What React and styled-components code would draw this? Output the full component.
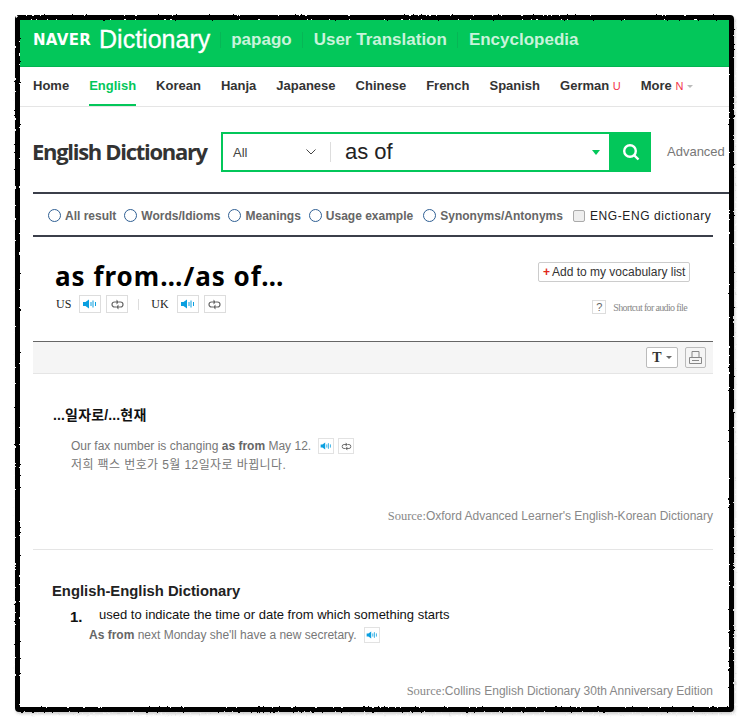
import React from "react";
import styled, { createGlobalStyle } from "styled-components";

const GlobalStyle = createGlobalStyle`
  html, body { margin: 0; padding: 0; background: #fff; }
  body { font-family: "Liberation Sans", Arial, "Noto Sans CJK KR", sans-serif; }
  * { box-sizing: border-box; }
`;

const tabs = ["Home", "English", "Korean", "Hanja", "Japanese", "Chinese", "French", "Spanish"];
const scopes = [
  ["All result", 10],
  ["Words/Idioms", 10],
  ["Meanings", 10],
  ["Usage example", 12],
  ["Synonyms/Antonyms", 12],
];

const SoundIcon = () => (
  <svg width="14" height="10" viewBox="0 0 14 10">
    <path d="M0 3h2.500L6 .5v9L2.500 7H0z" fill="#0a9fe0" />
    <path d="M8 3v4M10 1.500v7M12.500 3v4" stroke="#0a9fe0" strokeWidth="1" fill="none" />
  </svg>
);

const LoopIcon = () => (
  <svg width="13" height="11" viewBox="0 0 13 11" fill="none" stroke="#666" strokeWidth="1.200">
    <path d="M5 8H3.500a2.500 2.500 0 0 1 0-5H6" />
    <path d="M8 3h1.500a2.500 2.500 0 0 1 0 5H7" />
    <path d="M5.500 .5v5l2.500-2.500zM7.500 5.500v5L5 8z" fill="#666" stroke="none" />
  </svg>
);

const SearchIcon = () => (
  <svg width="18" height="18" viewBox="0 0 18 18" fill="none" stroke="#fff" strokeWidth="2.400">
    <circle cx="8" cy="8" r="5.800" />
    <path d="M12.300 12.300L16.500 16.500" />
  </svg>
);

const ChevronIcon = () => (
  <svg width="10" height="6" viewBox="0 0 10 6" fill="none" stroke="#444" strokeWidth="1">
    <path d="M.5.5L5 5 9.500.5" />
  </svg>
);

const PrintIcon = () => (
  <svg width="13" height="14" viewBox="0 0 13 14" fill="none" stroke="#888" strokeWidth="1">
    <path d="M3 6.500V.5h7v6M.5 6.500h12v6H.5zM3 9.500h7" />
  </svg>
);

const App = () => (
  <>
    <GlobalStyle />
    <svg width="0" height="0" style={{ position: "absolute" }}>
      <filter id="rough" x="-2%" y="-2%" width="104%" height="104%">
        <feTurbulence type="fractalNoise" baseFrequency="0.35" numOctaves="2" seed="4" />
        <feDisplacementMap in="SourceGraphic" scale="2.500" />
      </filter>
    </svg>
    <Page>
      <Frame>
        <Inner>
          <Header>
            <Logo>NAVER</Logo>
            <Brand>Dictionary</Brand>
            <HeaderLink $first>papago</HeaderLink>
            <HeaderLink>User Translation</HeaderLink>
            <HeaderLink>Encyclopedia</HeaderLink>
          </Header>

          <Nav>
            {tabs.map((tab) => (
              <Tab key={tab} $active={tab === "English"}>{tab}</Tab>
            ))}
            <Tab>German <New>U</New></Tab>
            <Tab>More <New>N</New><NavCaret /></Tab>
          </Nav>

          <SearchRow>
            <PageTitle>English Dictionary</PageTitle>
            <SearchBox>
              <Category>All<ChevronIcon /></Category>
              <Query>as of</Query>
              <DropCaret />
            </SearchBox>
            <SearchButton><SearchIcon /></SearchButton>
            <Advanced>Advanced</Advanced>
          </SearchRow>

          <Filters>
            {scopes.map(([label, gap]) => (
              <Scope key={label} $gap={gap}>
                <Radio type="radio" name="scope" />
                {label}
              </Scope>
            ))}
            <EngOnly>
              <Check />
              ENG-ENG dictionary
            </EngOnly>
          </Filters>

          <Entry>
            <EntryLeft>
              <Word>as from…/as of…</Word>
              <Phonetics>
                <Accent>US</Accent>
                <AudioButton><SoundIcon /></AudioButton>
                <AudioButton><LoopIcon /></AudioButton>
                <Divider />
                <Accent>UK</Accent>
                <AudioButton><SoundIcon /></AudioButton>
                <AudioButton><LoopIcon /></AudioButton>
              </Phonetics>
            </EntryLeft>
            <EntryRight>
              <AddButton><Plus>+</Plus>Add to my vocabulary list</AddButton>
              <Shortcut>
                <HelpBox>?</HelpBox>
                Shortcut for audio file
              </Shortcut>
            </EntryRight>
          </Entry>

          <Toolbar>
            <FontButton>T<SmallCaret /></FontButton>
            <PrintButton><PrintIcon /></PrintButton>
          </Toolbar>

          <Section>
            <Meaning>...일자로/...현재</Meaning>
            <Example>
              Our fax number is changing <b>as from</b> May 12.
              <MiniAudio $first><SoundIcon /></MiniAudio>
              <MiniAudio><LoopIcon /></MiniAudio>
            </Example>
            <Translation>저희 팩스 번호가 5월 12일자로 바뀝니다.</Translation>
            <Source $top={35}><Serif>Source:</Serif>Oxford Advanced Learner's English-Korean Dictionary</Source>
          </Section>

          <Collins>
            <CollinsTitle>English-English Dictionary</CollinsTitle>
            <Definition>
              <DefNumber>1.</DefNumber>
              used to indicate the time or date from which something starts
            </Definition>
            <DefExample>
              <b>As from</b> next Monday she'll have a new secretary.
              <MiniAudio $first><SoundIcon /></MiniAudio>
            </DefExample>
            <Source $top={40}><Serif>Source:</Serif>Collins English Dictionary 30th Anniversary Edition</Source>
          </Collins>
        </Inner>
      </Frame>
    </Page>
  </>
);

export default App;

const Page = styled.div`
  width: 749px;
  height: 727px;
  padding: 15px;
  overflow: hidden;
`;

const Frame = styled.div`
  position: relative;
  width: 719px;
  height: 697px;
  padding: 5px;
  background: #fff;
  &::after {
    content: "";
    position: absolute;
    inset: 0;
    border: 5px solid #000;
    border-radius: 4px;
    box-shadow: 1px 2px 3px rgba(0, 0, 0, 0.2);
    filter: url(#rough);
    pointer-events: none;
  }
`;

const Inner = styled.div`
  height: 100%;
  overflow: hidden;
`;

const Header = styled.header`
  height: 47px;
  background: #03c75a;
  border-bottom: 1px solid #02b451;
  display: flex;
  align-items: center;
  padding: 0 0 6px 13px;
`;

const Logo = styled.span`
  font-family: "DejaVu Sans", sans-serif;
  font-weight: 700;
  font-size: 15px;
  letter-spacing: 0.3px;
  color: #fff;
  margin-right: 8px;
`;

const Brand = styled.span`
  font-size: 25px;
  line-height: 28px;
  margin-top: -2px;
  color: #fff;
  -webkit-text-stroke: 0.3px #fff;
`;

const HeaderLink = styled.a`
  font-size: 17px;
  font-weight: 700;
  color: #c8f3da;
  margin-left: ${(p) => (p.$first ? "10px" : "0")};
  padding: 0 10px 0 ${(p) => (p.$first ? "10px" : "11px")};
  border-left: 1px solid #07b656;
  line-height: 16px;
`;

const Nav = styled.nav`
  height: 40px;
  border-bottom: 1px solid #e5e5e5;
  display: flex;
  gap: 20px;
  padding-left: 13px;
`;

const Tab = styled.a`
  font-size: 13px;
  font-weight: 700;
  line-height: 38px;
  height: 39px;
  white-space: nowrap;
  color: ${(p) => (p.$active ? "#03c75a" : "#333")};
  border-bottom: 2px solid ${(p) => (p.$active ? "#03c75a" : "transparent")};
`;

const New = styled.span`
  font-weight: 400;
  font-size: 11px;
  color: #f2354b;
`;

const NavCaret = styled.i`
  display: inline-block;
  margin-left: 4px;
  vertical-align: 2px;
  border: 3px solid transparent;
  border-top: 3px solid #bbb;
  border-bottom: 0;
`;

const SearchRow = styled.div`
  height: 85px;
  display: flex;
  align-items: flex-start;
  padding: 25px 0 0 12px;
`;

const PageTitle = styled.h1`
  margin: 0 14px 0 0;
  width: 175px;
  flex-shrink: 0;
  font-family: "Open Sans", sans-serif;
  font-size: 22px;
  font-weight: 700;
  letter-spacing: -1.300px;
  line-height: 39px;
  color: #333;
  white-space: nowrap;
`;

const SearchBox = styled.div`
  width: 390px;
  flex-shrink: 0;
  height: 40px;
  border: 2px solid #03c75a;
  display: flex;
  align-items: center;
`;

const Category = styled.div`
  width: 108px;
  height: 20px;
  padding: 0 14px 0 10px;
  border-right: 1px solid #ddd;
  font-size: 13px;
  color: #444;
  display: flex;
  align-items: center;
  justify-content: space-between;
`;

const Query = styled.div`
  flex: 1;
  padding-left: 14px;
  font-size: 22px;
  color: #222;
`;

const DropCaret = styled.i`
  margin-right: 9px;
  border: 4px solid transparent;
  border-top: 5px solid #03c75a;
  border-bottom: 0;
`;

const SearchButton = styled.div`
  width: 40px;
  height: 40px;
  flex-shrink: 0;
  background: #03c75a;
  display: flex;
  align-items: center;
  justify-content: center;
`;

const Advanced = styled.a`
  margin-left: 16px;
  line-height: 40px;
  font-size: 13px;
  color: #777;
  white-space: nowrap;
`;

const Filters = styled.div`
  height: 45px;
  margin-left: 13px;
  width: 696px;
  border-top: 2px solid #3b3f4a;
  position: relative;
  padding-left: 15px;
  display: flex;
  align-items: center;
  &::after {
    content: "";
    position: absolute;
    left: 0;
    right: 16px;
    bottom: 0;
    height: 2px;
    background: #3b3f4a;
  }
`;

const Scope = styled.label`
  display: flex;
  align-items: center;
  gap: 4px;
  font-size: 12px;
  font-weight: 700;
  color: #666;
  margin-right: ${(p) => p.$gap - 2}px;
  white-space: nowrap;
`;

const Radio = styled.input`
  appearance: none;
  width: 13px;
  height: 13px;
  margin: 0;
  border: 1px solid #2f5f93;
  border-radius: 50%;
  background: #fff;
`;

const EngOnly = styled.label`
  display: flex;
  align-items: center;
  gap: 5px;
  font-size: 12px;
  letter-spacing: 0.6px;
  color: #222;
  white-space: nowrap;
`;

const Check = styled.span`
  width: 12px;
  height: 12px;
  border: 1px solid #aaa;
  border-radius: 2px;
  background: #eee;
`;

const Entry = styled.div`
  height: 104px;
  margin-left: 13px;
  width: 680px;
  padding: 24px 23px 0 22px;
  display: flex;
  justify-content: space-between;
`;

const EntryLeft = styled.div``;

const Word = styled.h2`
  margin: 0;
  font-family: "Noto Sans", sans-serif;
  font-size: 26px;
  font-weight: 700;
  letter-spacing: 1px;
  line-height: 30px;
  white-space: nowrap;
  color: #000;
`;

const Phonetics = styled.div`
  display: flex;
  align-items: center;
  margin-top: 4px;
  margin-left: 1px;
  gap: 5px;
`;

const Accent = styled.span`
  font-family: "Liberation Serif", serif;
  font-size: 12px;
  color: #222;
  margin-right: 3px;
`;

const AudioButton = styled.span`
  width: 22px;
  height: 18px;
  border: 1px solid #ddd;
  display: flex;
  align-items: center;
  justify-content: center;
`;

const Divider = styled.i`
  width: 1px;
  height: 11px;
  background: #ddd;
  margin: 0 7px 0 5px;
`;

const EntryRight = styled.div`
  margin-top: 1px;
  display: flex;
  flex-direction: column;
  align-items: flex-end;
`;

const AddButton = styled.a`
  height: 20px;
  width: 152px;
  border: 1px solid #ccc;
  border-radius: 2px;
  font-size: 12px;
  line-height: 18px;
  color: #333;
  padding-left: 4px;
  white-space: nowrap;
`;

const Plus = styled.b`
  color: #e0271a;
  margin-right: 2px;
`;

const Shortcut = styled.div`
  margin-top: 18px;
  margin-right: 3px;
  display: flex;
  align-items: center;
  gap: 7px;
  font-family: "Liberation Serif", serif;
  font-size: 10px;
  letter-spacing: -0.650px;
  color: #888;
  white-space: nowrap;
`;

const HelpBox = styled.span`
  width: 14px;
  height: 14px;
  border: 1px solid #ddd;
  font-family: "Liberation Sans", sans-serif;
  font-size: 11px;
  line-height: 12px;
  text-align: center;
  letter-spacing: 0;
  color: #666;
`;

const Toolbar = styled.div`
  height: 33px;
  margin-left: 13px;
  width: 680px;
  background: #f5f5f5;
  border-top: 1px solid #666;
  border-bottom: 1px solid #e5e5e5;
  display: flex;
  justify-content: flex-end;
  align-items: center;
  gap: 7px;
  padding-right: 7px;
`;

const FontButton = styled.span`
  width: 32px;
  height: 21px;
  background: #fff;
  border: 1px solid #bbb;
  border-radius: 2px;
  font-family: "Liberation Serif", serif;
  font-weight: 700;
  font-size: 14px;
  color: #333;
  display: flex;
  align-items: center;
  justify-content: center;
  gap: 4px;
`;

const SmallCaret = styled.i`
  border: 3px solid transparent;
  border-top: 3px solid #666;
  border-bottom: 0;
`;

const PrintButton = styled.span`
  width: 21px;
  height: 21px;
  border: 1px solid #bbb;
  border-radius: 2px;
  display: flex;
  align-items: center;
  justify-content: center;
`;

const Section = styled.section`
  margin-left: 13px;
  width: 680px;
  height: 176px;
  border-bottom: 1px solid #e5e5e5;
  padding: 33px 0 0 20px;
`;

const Meaning = styled.div`
  font-size: 14px;
  letter-spacing: 0.15px;
  font-weight: 700;
  line-height: 17px;
  color: #111;
`;

const Example = styled.div`
  margin: 13px 0 0 18px;
  display: flex;
  align-items: center;
  font-size: 12px;
  line-height: 18px;
  color: #777;
  white-space: pre-wrap;
  b { color: #666; }
`;

const MiniAudio = styled.span`
  width: 16px;
  height: 16px;
  margin-left: ${(p) => (p.$first ? "7px" : "4px")};
  border: 1px solid #e2e2e2;
  display: flex;
  align-items: center;
  justify-content: center;
  svg { transform: scale(0.8); flex-shrink: 0; }
`;

const Translation = styled.div`
  margin: 1px 0 0 18px;
  font-size: 12px;
  letter-spacing: 0.4px;
  line-height: 18px;
  color: #777;
`;

const Source = styled.div`
  margin-top: ${(p) => p.$top}px;
  text-align: right;
  font-size: 12px;
  line-height: 14px;
  color: #888;
  white-space: nowrap;
`;

const Serif = styled.span`
  font-family: "Liberation Serif", serif;
  font-size: 12.500px;
`;

const Collins = styled.section`
  margin-left: 13px;
  width: 680px;
  padding: 33px 0 0 19px;
`;

const CollinsTitle = styled.h3`
  margin: 0;
  font-size: 14.800px;
  font-weight: 700;
  line-height: 17px;
  color: #222;
`;

const Definition = styled.div`
  margin-top: 6px;
  margin-left: 18px;
  display: flex;
  font-size: 13px;
  line-height: 18px;
  color: #111;
  white-space: nowrap;
`;

const DefNumber = styled.b`
  width: 29px;
  font-size: 15px;
  position: relative;
  top: 2px;
`;

const DefExample = styled.div`
  margin: 2px 0 0 37px;
  display: flex;
  align-items: center;
  font-size: 12px;
  line-height: 18px;
  color: #777;
  white-space: pre-wrap;
  b { color: #666; }
`;
